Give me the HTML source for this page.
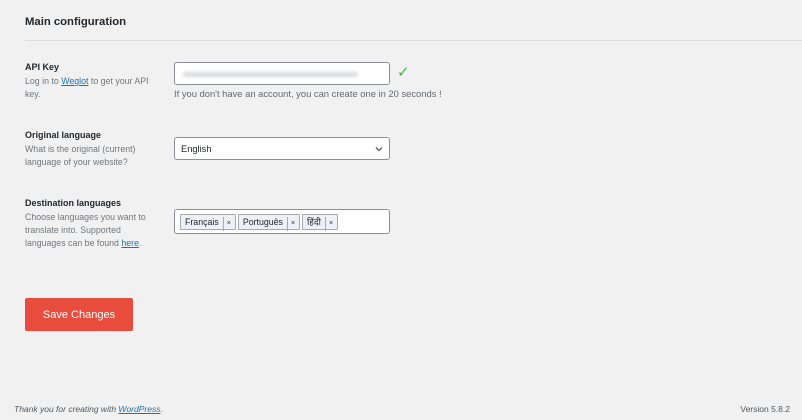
<!DOCTYPE html>
<html><head><meta charset="utf-8"><style>
*{margin:0;padding:0;box-sizing:border-box}
body{width:802px;height:420px;background:#f1f1f1;font-family:"Liberation Sans",sans-serif;color:#1d2327;position:relative;overflow:hidden;font-size:9px}
.a{position:absolute}
h2{position:absolute;left:25px;top:16px;font-size:11.3px;font-weight:bold;color:#23282d}
.hr{position:absolute;left:25px;right:0;top:40px;height:1px;background:#dcdcde}
.lbl{font-weight:bold;font-size:9px;color:#23282d}
.desc{color:#72777c;font-size:8.8px;line-height:13px;width:124px}
a{color:#2271b1}
.inp{position:absolute;left:174px;width:216px;background:#fff;border:1px solid #8c8f94;border-radius:3px}
.tag{display:inline-block;background:#eef0f8;border:1px solid #a7aaad;height:16px;line-height:14px;font-size:8.8px;padding:0 4px;margin-right:2px;vertical-align:top;border-radius:1px}
.x{display:inline-block;border-left:1px solid #a7aaad;padding-left:3px;margin-left:4px;font-size:7px}
</style></head><body>
<h2>Main configuration</h2>
<div class="hr"></div>
<div class="a lbl" style="left:25px;top:62px">API Key</div>
<div class="a desc" style="left:25px;top:75px">Log in to <a href="#">Weglot</a> to get your API key.</div>
<div class="inp" style="top:62px;height:23px"><div class="a" style="left:8px;top:9px;width:175px;height:5px;background:#d8dadc;border-radius:3px;filter:blur(1.5px)"></div></div>
<div class="a" style="left:397px;top:63px;color:#46b450;font-size:15px">✓</div>
<div class="a" style="left:174px;top:88px;color:#646970;font-size:9.4px">If you don't have an account, you can create one in 20 seconds !</div>
<div class="a lbl" style="left:25px;top:130px">Original language</div>
<div class="a desc" style="left:25px;top:143px">What is the original (current) language of your website?</div>
<div class="inp" style="top:137px;height:23px;padding:6px 0 0 6px;font-size:9.3px">English<svg class="a" style="right:6px;top:8px" width="8" height="6" viewBox="0 0 8 6"><path d="M1 1.5L4 4.5L7 1.5" stroke="#50575e" stroke-width="1.3" fill="none"/></svg></div>
<div class="a lbl" style="left:25px;top:198px">Destination languages</div>
<div class="a desc" style="left:25px;top:211px">Choose languages you want to translate into. Supported languages can be found <a href="#">here</a>.</div>
<div class="inp" style="top:209px;height:25px;padding:4px 0 0 5px"><span class="tag">Français<span class="x">×</span></span><span class="tag">Português<span class="x">×</span></span><span class="tag">हिंदी<span class="x">×</span></span></div>
<div class="a" style="left:25px;top:298px;width:108px;height:33px;background:#e74c3c;border-radius:2px;color:#fff;font-size:11px;text-align:center;line-height:34px">Save Changes</div>
<div class="a" style="left:14px;top:404px;color:#50575e;font-style:italic;font-size:8.5px">Thank you for creating with <a href="#">WordPress</a>.</div>
<div class="a" style="right:12px;top:404px;color:#50575e;font-size:8.5px">Version 5.8.2</div>
</body></html>
